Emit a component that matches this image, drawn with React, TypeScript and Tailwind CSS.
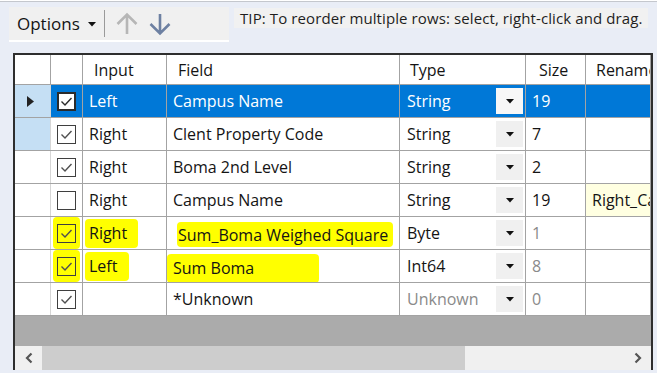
import { ReactNode } from "react";

type Row = {
  checked: boolean;
  input: string;
  field: string;
  type: string;
  size: string;
  rename?: string;
  muted?: boolean;
  sizeMuted?: boolean;
  hl?: boolean;
  headerTint?: boolean;
};

const rows: Row[] = [
  { checked: true, input: "Left", field: "Campus Name", type: "String", size: "19", headerTint: true },
  { checked: true, input: "Right", field: "Clent Property Code", type: "String", size: "7", headerTint: true },
  { checked: true, input: "Right", field: "Boma 2nd Level", type: "String", size: "2" },
  { checked: false, input: "Right", field: "Campus Name", type: "String", size: "19", rename: "Right_Campus Name" },
  { checked: true, input: "Right", field: "Sum_Boma Weighed Square", type: "Byte", size: "1", sizeMuted: true, hl: true },
  { checked: true, input: "Left", field: "Sum Boma", type: "Int64", size: "8", sizeMuted: true, hl: true },
  { checked: true, input: "", field: "*Unknown", type: "Unknown", size: "0", muted: true, sizeMuted: true },
];

const CheckBox = ({ checked, strong }: { checked: boolean; strong?: boolean }) => (
  <div
    className={`flex h-[19px] w-[19px] items-center justify-center ${
      strong ? "border-2 border-[#2b2b2b] bg-white" : "border border-[#3f3f3f]"
    }`}
  >
    {checked && (
      <svg width="15" height="15" viewBox="0 0 15 15">
        <polyline
          points="2.5,7.5 6,11 12.5,4"
          fill="none"
          stroke={strong ? "#2b2b2b" : "#505050"}
          strokeWidth="1.4"
        />
      </svg>
    )}
  </div>
);

const Caret = () => (
  <svg width="8" height="5" viewBox="0 0 8 5">
    <polygon points="0,0 8,0 4,4.5" fill="#111" />
  </svg>
);

const Cell = ({ w, children, className = "" }: { w: string; children?: ReactNode; className?: string }) => (
  <div className={`flex h-full shrink-0 items-center overflow-hidden border-r border-[#a3a3a3] ${w} ${className}`}>{children}</div>
);

const Arrow = ({ up, color }: { up?: boolean; color: string }) => (
  <svg width="24" height="24" viewBox="0 0 24 24" className={up ? "" : "rotate-180"}>
    <path d="M12 2.5 V22 M2.5 12 L12 2.5 L21.5 12" fill="none" stroke={color} strokeWidth="2.6" />
  </svg>
);

export default function App() {
  return (
    <div className="h-[373px] w-[657px] overflow-hidden bg-[#e9edf6] font-['Open_Sans',sans-serif] text-[#141414]">
      <div className="h-[2px] border-b border-[#c4c7cd] bg-white" />

      {/* Toolbar + tip */}
      <div className="flex items-start pl-[9px] pt-[5px]">
        <div className="flex h-[35px] w-[220px] items-center border-b-2 border-white bg-[#f0f0f0] pl-[8px]">
          <span className="text-[17px] leading-none">Options</span>
          <span className="ml-[8px] mt-[2px]">
            <Caret />
          </span>
          <div className="ml-[8px] h-[27px] w-px bg-[#9a9a9a]" />
          <div className="ml-[10px] flex items-center gap-[9px]">
            <Arrow up color="#b6b6b6" />
            <Arrow color="#6d80a2" />
          </div>
        </div>
        <div className="ml-[5px] mt-[1px] flex h-[20px] w-[414px] items-center bg-[#f1f1f1] pl-[6px] text-[15px] tracking-[0.1px] whitespace-nowrap text-[#1e1e1e]">
          TIP: To reorder multiple rows: select, right-click and drag.
        </div>
      </div>

      {/* Grid */}
      <div className="ml-[13px] mt-[11px] h-[317px] w-[640px] overflow-hidden border-x-2 border-t-2 border-[#2e2e2e] bg-white text-[16px]">
        {/* header */}
        <div className="flex h-[30px] border-b border-[#a3a3a3]">
          <Cell w="w-[36px]" />
          <Cell w="w-[32px]" />
          <Cell w="w-[84px]" className="pl-[11px]">Input</Cell>
          <Cell w="w-[233px]" className="pl-[11px]">Field</Cell>
          <Cell w="w-[126px]" className="pl-[10px]">Type</Cell>
          <Cell w="w-[60px]" className="pl-[13px]">Size</Cell>
          <Cell w="w-[65px]" className="whitespace-nowrap pl-[10px]">Rename</Cell>
        </div>

        {rows.map((r, i) => {
          const sel = i === 0;
          return (
            <div
              key={i}
              className={`flex h-[33px] border-b border-[#a3a3a3] ${sel ? "bg-[#0078d7] text-white" : ""}`}
            >
              <Cell
                w="w-[36px]"
                className={`justify-center border-[#d6d6d6] ${r.headerTint ? "bg-[#c5dff4]" : "bg-white"}`}
              >
                {sel && (
                  <svg width="7" height="11" viewBox="0 0 7 11" className="-ml-[4px]">
                    <polygon points="0,0 7,5.5 0,11" fill="#222" />
                  </svg>
                )}
              </Cell>
              <Cell w="w-[32px]" className="justify-center">
                <div className={`flex h-[32px] w-[27px] items-center justify-center rounded-[4px] ${r.hl ? "bg-[#ffff00]" : ""}`}>
                  <CheckBox checked={r.checked} strong={sel} />
                </div>
              </Cell>
              <Cell w="w-[84px]" className="pl-[2px]">
                {r.hl ? (
                  <div className={`flex h-[29px] items-center rounded-[4px] bg-[#ffff00] pl-[4px] ${i === 4 ? "w-[53px]" : "w-[44px]"}`}>
                    {r.input}
                  </div>
                ) : (
                  <span className="pl-[4px]">{r.input}</span>
                )}
              </Cell>
              <Cell w="w-[233px]" className={i === 4 ? "pl-[10px]" : i === 5 ? "" : "pl-[6px]"}>
                {r.hl ? (
                  <div
                    className={`flex items-center rounded-[4px] bg-[#ffff00] whitespace-nowrap ${
                      i === 4 ? "mt-[3px] h-[25px] w-[216px] pl-[1px]" : "mt-[4px] h-[29px] w-[152px] pl-[6px]"
                    }`}
                  >
                    {r.field}
                  </div>
                ) : (
                  <span className="whitespace-nowrap">{r.field}</span>
                )}
              </Cell>
              <Cell w="w-[126px]" className="justify-between pl-[7px] pr-[2px]">
                <span className={r.muted ? "text-[#8a8a8a]" : ""}>{r.type}</span>
                <div className={`flex h-[26px] w-[27px] items-center justify-center ${sel ? "bg-[#f7f7f7]" : "bg-[#f0f0f0]"}`}>
                  <Caret />
                </div>
              </Cell>
              <Cell w="w-[60px]" className={`pl-[6px] ${r.sizeMuted ? "text-[#8a8a8a]" : ""}`}>
                {r.size}
              </Cell>
              <Cell w="w-[65px]" className={`whitespace-nowrap pl-[6px] ${r.rename ? "bg-[#ffffe1]" : ""}`}>
                {r.rename}
              </Cell>
            </div>
          );
        })}

        <div className="h-[30px] bg-[#ababab]" />

        {/* horizontal scrollbar */}
        <div className="flex h-[24px] items-center bg-[#f0f0f0]">
          <div className="flex w-[27px] justify-center">
            <svg width="8" height="12" viewBox="0 0 8 12">
              <polyline points="6.5,1.5 2,6 6.5,10.5" fill="none" stroke="#555" strokeWidth="2.2" />
            </svg>
          </div>
          <div className="h-full w-[423px] bg-[#cdcdcd]" />
          <div className="flex-1" />
          <div className="flex w-[27px] justify-center">
            <svg width="8" height="12" viewBox="0 0 8 12">
              <polyline points="1.5,1.5 6,6 1.5,10.5" fill="none" stroke="#555" strokeWidth="2.2" />
            </svg>
          </div>
        </div>
      </div>
    </div>
  );
}
